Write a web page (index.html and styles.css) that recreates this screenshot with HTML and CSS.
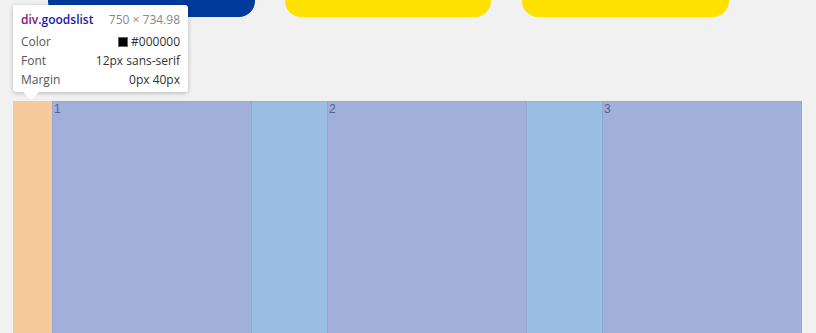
FILE: index.html
```html
<!DOCTYPE html>
<html>
<head>
<meta charset="utf-8">
<link rel="stylesheet" href="styles.css">
</head>
<body>
<div class="tabs">
  <div class="tab tab-blue"></div>
  <div class="tab tab-yellow"></div>
  <div class="tab tab-yellow tab-last"></div>
</div>
<div class="stage">
  <div class="margin-box"></div>
  <div class="goodslist">
    <div class="item">1</div>
    <div class="item">2</div>
    <div class="item">3</div>
  </div>
  <div class="tooltip">
    <div class="tip-title"><span class="tag">div</span><span class="cls">.goodslist</span><span class="dims">750 × 734.98</span></div>
    <div class="tip-row"><span class="label">Color</span><span class="value"><span class="swatch"></span>#000000</span></div>
    <div class="tip-row"><span class="label">Font</span><span class="value">12px sans-serif</span></div>
    <div class="tip-row"><span class="label">Margin</span><span class="value">0px 40px</span></div>
    <div class="arrow"></div>
  </div>
</div>
</body>
</html>
```
FILE: styles.css
```css
html, body {
  margin: 0;
  padding: 0;
  background: #f1f1f1;
  width: 816px;
  height: 333px;
  overflow: hidden;
}
.tabs {
  display: flex;
  gap: 30px;
  padding-left: 48px;
}
.tab {
  width: 207px;
  height: 17px;
  border-radius: 0 0 16px 16px;
}
.tab-blue { background: #003a9b; }
.tab-yellow { background: #ffe100; width: 206px; }
.tab-last { margin-left: 1px; width: 207px; }
.stage {
  position: relative;
  display: flex;
  margin-top: 84px;
  padding-left: 13px;
  height: 232px;
}
.margin-box {
  width: 39px;
  background: #f6ca9a;
}
.goodslist {
  width: 750px;
  display: flex;
  justify-content: space-between;
  background: #9bbfe3;
  box-shadow: inset 0 1px 0 #94b4dc;
}
.item {
  width: 200px;
  background: #a0b0d8;
  box-shadow: inset 1px 0 0 #93a8d2, inset -1px 0 0 #93a8d2, inset 0 1px 0 #94a8d2;
  color: #4d6797;
  font-family: "Liberation Sans", Arial, sans-serif;
  font-size: 12px;
  line-height: 14px;
  padding: 1px 2px;
  box-sizing: border-box;
}
.tooltip {
  position: absolute;
  left: 13px;
  top: -96px;
  width: 175px;
  box-sizing: border-box;
  background: #fff;
  border-radius: 3px;
  box-shadow: 0 1px 4px rgba(0,0,0,0.25);
  padding: 5px 8px 3px 8px;
  font-family: "Open Sans", "Noto Sans", sans-serif;
  font-size: 12px;
  line-height: 19px;
  color: #555;
}
.tip-title {
  display: flex;
  align-items: baseline;
  font-weight: 600;
  margin-bottom: 3px;
}
.tag { color: #881280; }
.cls { color: #1a1aa6; }
.dims {
  margin-left: auto;
  font-weight: 400;
  color: #888;
}
.tip-row {
  display: flex;
  justify-content: space-between;
}
.label { color: #555; }
.value { color: #333; display: flex; align-items: center; }
.swatch {
  display: inline-block;
  width: 10px;
  height: 10px;
  background: #000;
  border: 1px solid #666;
  box-sizing: border-box;
  margin-right: 3px;
}
.arrow {
  position: absolute;
  left: 10px;
  bottom: -8px;
  width: 0;
  height: 0;
  border-left: 8px solid transparent;
  border-right: 8px solid transparent;
  border-top: 8px solid #fff;
}
```
